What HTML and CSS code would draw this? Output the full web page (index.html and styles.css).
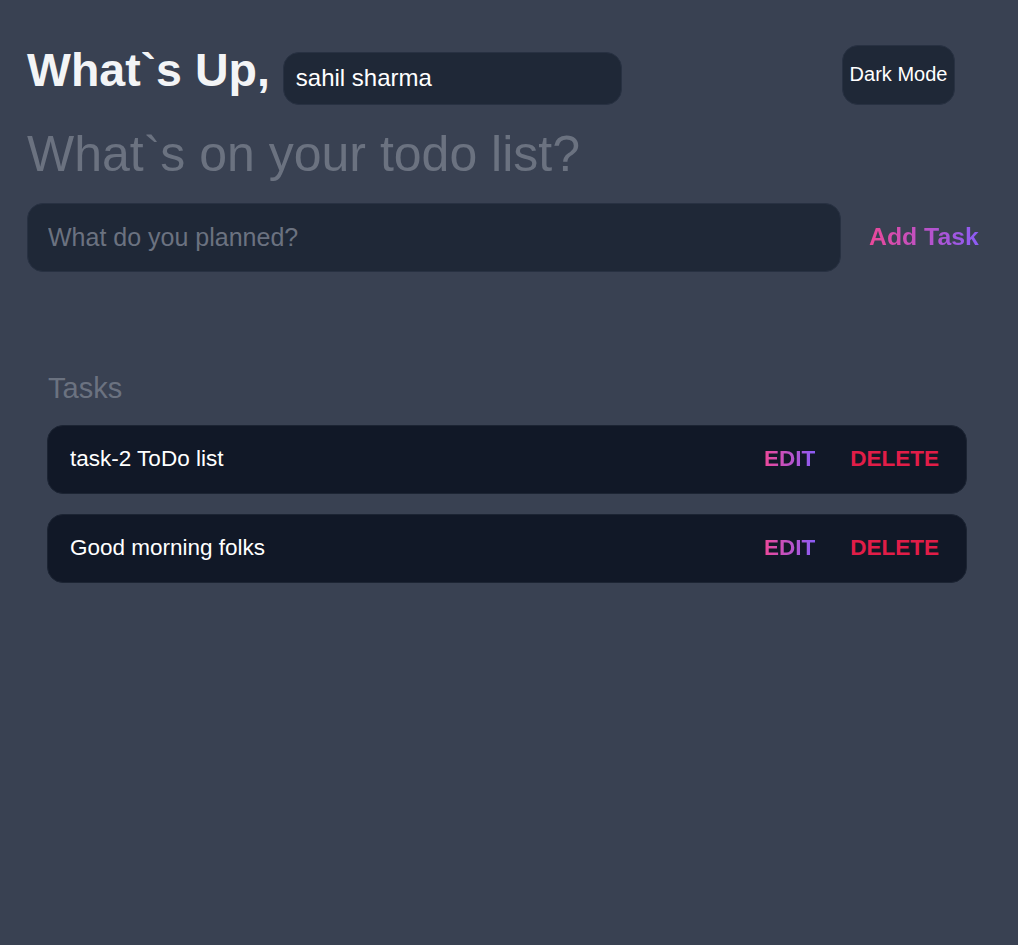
FILE: index.html
```html
<!DOCTYPE html>
<html lang="en">
<head>
<meta charset="utf-8">
<title>Todo</title>
<link rel="stylesheet" href="styles.css">
</head>
<body>
<div class="page">
  <header class="header">
    <div class="greet">
      <h1 class="title">What`s Up,</h1>
      <input class="name-input" type="text" value="sahil sharma">
    </div>
    <button class="mode-btn">Dark Mode</button>
  </header>
  <h2 class="subtitle">What`s on your todo list?</h2>
  <div class="add-row">
    <input class="task-input" type="text" placeholder="What do you planned?">
    <button class="add-btn"><span class="grad">Add Task</span></button>
  </div>
  <section class="tasks">
    <h3 class="tasks-head">Tasks</h3>
    <div class="task">
      <span class="task-text">task-2 ToDo list</span>
      <div class="actions">
        <button class="act edit"><span class="grad">EDIT</span></button>
        <button class="act del">DELETE</button>
      </div>
    </div>
    <div class="task">
      <span class="task-text">Good morning folks</span>
      <div class="actions">
        <button class="act edit"><span class="grad">EDIT</span></button>
        <button class="act del">DELETE</button>
      </div>
    </div>
  </section>
</div>
</body>
</html>
```
FILE: styles.css
```css
* { box-sizing: border-box; }
html, body { margin: 0; padding: 0; }
body {
  background: #394152;
  font-family: "Liberation Sans", Arial, sans-serif;
  color: #f3f4f6;
  min-height: 945px;
}
.page {
  padding: 44px 27px 0 27px;
}
.header {
  display: flex;
  justify-content: space-between;
  align-items: flex-end;
}
.greet {
  display: flex;
  align-items: baseline;
  gap: 13px;
}
.title {
  margin: 0;
  font-size: 46.5px;
  font-weight: 700;
  line-height: 52px;
  color: #f3f4f6;
}
.name-input {
  width: 339px;
  height: 53px;
  padding: 0 12px;
  font-family: inherit;
  font-size: 24px;
  color: #ffffff;
  background: #1f2837;
  border: 1px solid #283142;
  border-radius: 16px;
  outline: none;
}
.mode-btn {
  width: 113px;
  height: 60px;
  margin-right: 36px;
  padding: 0;
  font-family: inherit;
  font-size: 20px;
  color: #ffffff;
  background: #1f2837;
  border: 1px solid #283142;
  border-radius: 16px;
}
.subtitle {
  margin: 21px 0 0 0;
  font-size: 50px;
  font-weight: 400;
  line-height: 56px;
  color: #6b7280;
}
.add-row {
  display: flex;
  align-items: center;
  gap: 16px;
  margin-top: 21px;
}
.task-input {
  width: 814px;
  height: 69px;
  padding: 0 20px;
  font-family: inherit;
  font-size: 25px;
  color: #ffffff;
  background: #1f2837;
  border: 1px solid #283142;
  border-radius: 16px;
  outline: none;
}
.task-input::placeholder { color: #6b7280; }
.add-btn {
  background: none;
  border: none;
  padding: 0 12px;
  font-family: inherit;
  font-size: 24.8px;
  font-weight: 700;
}
.grad {
  background: linear-gradient(90deg, #ec4899, #8b5cf6);
  -webkit-background-clip: text;
  background-clip: text;
  color: transparent;
}
.tasks {
  margin-top: 100px;
  padding: 0 24px 0 20px;
}
.tasks-head {
  margin: 0 0 21px 1px;
  font-size: 29px;
  font-weight: 400;
  line-height: 32px;
  color: #6b7280;
}
.task {
  display: flex;
  align-items: center;
  justify-content: space-between;
  height: 69px;
  padding: 0 27px 0 22px;
  margin-bottom: 20px;
  background: #111827;
  border: 1px solid #1c2433;
  border-radius: 16px;
}
.task-text {
  font-size: 22.5px;
  color: #ffffff;
}
.actions {
  display: flex;
  gap: 35px;
}
.act {
  background: none;
  border: none;
  padding: 0;
  font-family: inherit;
  font-size: 22.5px;
  font-weight: 700;
}
.del { color: #e11d48; }
```
